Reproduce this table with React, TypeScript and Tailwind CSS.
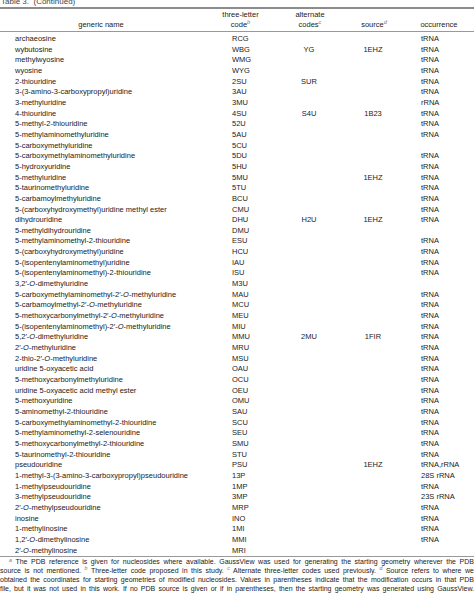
import type { ReactElement, ReactNode } from 'react'

type Row = [string, string, string, string, string]

// name | three-letter code | alternate codes | source | occurrence
// "{O}" marks the italic O of the 2'-O positions
const rows: Row[] = [
  ['archaeosine', 'RCG', '', '', 'tRNA'],
  ['wybutosine', 'WBG', 'YG', '1EHZ', 'tRNA'],
  ['methylwyosine', 'WMG', '', '', 'tRNA'],
  ['wyosine', 'WYG', '', '', 'tRNA'],
  ['2-thiouridine', '2SU', 'SUR', '', 'tRNA'],
  ['3-(3-amino-3-carboxypropyl)uridine', '3AU', '', '', 'tRNA'],
  ['3-methyluridine', '3MU', '', '', 'rRNA'],
  ['4-thiouridine', '4SU', 'S4U', '1B23', 'tRNA'],
  ['5-methyl-2-thiouridine', '52U', '', '', 'tRNA'],
  ['5-methylaminomethyluridine', '5AU', '', '', 'tRNA'],
  ['5-carboxymethyluridine', '5CU', '', '', ''],
  ['5-carboxymethylaminomethyluridine', '5DU', '', '', 'tRNA'],
  ['5-hydroxyuridine', '5HU', '', '', 'tRNA'],
  ['5-methyluridine', '5MU', '', '1EHZ', 'tRNA'],
  ['5-taurinomethyluridine', '5TU', '', '', 'tRNA'],
  ['5-carbamoylmethyluridine', 'BCU', '', '', 'tRNA'],
  ['5-(carboxyhydroxymethyl)uridine methyl ester', 'CMU', '', '', 'tRNA'],
  ['dihydrouridine', 'DHU', 'H2U', '1EHZ', 'tRNA'],
  ['5-methyldihydrouridine', 'DMU', '', '', ''],
  ['5-methylaminomethyl-2-thiouridine', 'ESU', '', '', 'tRNA'],
  ['5-(carboxyhydroxymethyl)uridine', 'HCU', '', '', 'tRNA'],
  ['5-(isopentenylaminomethyl)uridine', 'IAU', '', '', 'tRNA'],
  ['5-(isopentenylaminomethyl)-2-thiouridine', 'ISU', '', '', 'tRNA'],
  ['3,2′-{O}-dimethyluridine', 'M3U', '', '', ''],
  ['5-carboxymethylaminomethyl-2′-{O}-methyluridine', 'MAU', '', '', 'tRNA'],
  ['5-carbamoylmethyl-2′-{O}-methyluridine', 'MCU', '', '', 'tRNA'],
  ['5-methoxycarbonylmethyl-2′-{O}-methyluridine', 'MEU', '', '', 'tRNA'],
  ['5-(isopentenylaminomethyl)-2′-{O}-methyluridine', 'MIU', '', '', 'tRNA'],
  ['5,2′-{O}-dimethyluridine', 'MMU', '2MU', '1FIR', 'tRNA'],
  ['2′-{O}-methyluridine', 'MRU', '', '', 'tRNA'],
  ['2-thio-2′-{O}-methyluridine', 'MSU', '', '', 'tRNA'],
  ['uridine 5-oxyacetic acid', 'OAU', '', '', 'tRNA'],
  ['5-methoxycarbonylmethyluridine', 'OCU', '', '', 'tRNA'],
  ['uridine 5-oxyacetic acid methyl ester', 'OEU', '', '', 'tRNA'],
  ['5-methoxyuridine', 'OMU', '', '', 'tRNA'],
  ['5-aminomethyl-2-thiouridine', 'SAU', '', '', 'tRNA'],
  ['5-carboxymethylaminomethyl-2-thiouridine', 'SCU', '', '', 'tRNA'],
  ['5-methylaminomethyl-2-selenouridine', 'SEU', '', '', 'tRNA'],
  ['5-methoxycarbonylmethyl-2-thiouridine', 'SMU', '', '', 'tRNA'],
  ['5-taurinomethyl-2-thiouridine', 'STU', '', '', 'tRNA'],
  ['pseudouridine', 'PSU', '', '1EHZ', 'tRNA,rRNA'],
  ['1-methyl-3-(3-amino-3-carboxypropyl)pseudouridine', '13P', '', '', '28S rRNA'],
  ['1-methylpseudouridine', '1MP', '', '', 'tRNA'],
  ['3-methylpseudouridine', '3MP', '', '', '23S rRNA'],
  ['2′-{O}-methylpseudouridine', 'MRP', '', '', 'tRNA'],
  ['inosine', 'INO', '', '', 'tRNA'],
  ['1-methylinosine', '1MI', '', '', 'tRNA'],
  ['1,2′-{O}-dimethylinosine', 'MMI', '', '', 'tRNA'],
  ['2′-{O}-methylinosine', 'MRI', '', '', ''],
]

const formatName = (name: string): ReactNode =>
  name.split('{O}').map((part, i) => (
    <span key={i}>
      {i > 0 && <i>O</i>}
      {part}
    </span>
  ))

const Mark = ({ c }: { c: string }): ReactElement => (
  <sup className="italic text-[#777]">{c}</sup>
)

const Header = (): ReactElement => (
  <div className="flex h-[23px] items-end border-b border-[#999] pb-[1px] leading-[10px]">
    <div className="w-[202px] text-center">generic name</div>
    <div className="w-[77px] text-center">
      three-letter
      <br />
      code
      <Mark c="b" />
    </div>
    <div className="w-[62px] text-center">
      alternate
      <br />
      codes
      <Mark c="c" />
    </div>
    <div className="w-[66px] text-center">
      source
      <Mark c="d" />
    </div>
    <div className="w-[64px] text-center">occurrence</div>
  </div>
)

const TableRow = ({ row }: { row: Row }): ReactElement => {
  const [name, code, alt, source, occ] = row

  return (
    <div className="grid h-[10.67px] grid-cols-[232px_48px_58px_70px_1fr] items-center leading-[10.67px]">
      <div className="truncate pl-[15px]">{formatName(name)}</div>
      <div>{code}</div>
      <div className="text-center">{alt}</div>
      <div className="text-center">{source}</div>
      <div className="pl-[13px]">{occ}</div>
    </div>
  )
}

export default function App(): ReactElement {
  return (
    <div className="h-[593px] w-[474px] overflow-hidden bg-white font-['Liberation_Sans',Arial,sans-serif] text-[#222]">
      <div className="h-[7px] overflow-hidden">
        <div className="-mt-[3px] pl-[1px] text-[8px] leading-[10px] text-[#444]">
          Table 3.&nbsp;&nbsp;(Continued)
        </div>
      </div>
      <div className="border-t-2 border-[#8c8c8c] text-[7.5px]">
        <Header />
        <div className="pt-[2px]">
          {rows.map((row) => (
            <TableRow key={row[0]} row={row} />
          ))}
        </div>
        <div className="border-t border-[#999]" />
      </div>
      <div className="pt-[1px] text-[7px] leading-[8.8px]">
        <div className="pl-[9px] text-justify [text-align-last:justify]">
          <Mark c="a" /> The PDB reference is given for nucleosides where available. GaussView
          was used for generating the starting geometry wherever the PDB
        </div>
        <div className="text-justify [text-align-last:justify]">
          source is not mentioned. <Mark c="b" /> Three-letter code proposed in this study.{' '}
          <Mark c="c" /> Alternate three-letter codes used previously. <Mark c="d" /> Source
          refers to where we
        </div>
        <div className="text-justify [text-align-last:justify]">
          obtained the coordinates for starting geometries of modified nucleosides. Values in
          parentheses indicate that the modification occurs in that PDB
        </div>
        <div className="text-justify [text-align-last:justify]">
          file, but it was not used in this work. If no PDB source is given or if in
          parentheses, then the starting geometry was generated using GaussView.
        </div>
      </div>
    </div>
  )
}
